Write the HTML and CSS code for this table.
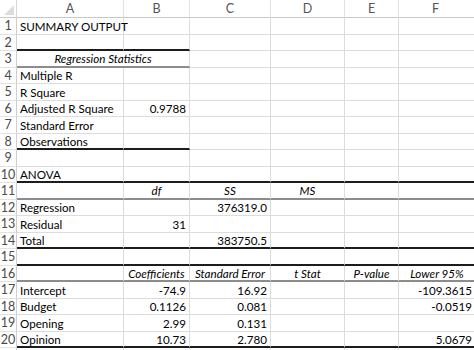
FILE: index.html
```html
<!DOCTYPE html>
<html>
<head>
<meta charset="utf-8">
<link rel="stylesheet" href="styles.css">
</head>
<body>
<div class="sheet">
  <div class="corner"><span class="tri"></span></div>
  <div class="ch">A</div><div class="ch">B</div><div class="ch">C</div><div class="ch">D</div><div class="ch">E</div><div class="ch last">F</div>

  <div class="rh">1</div><div class="c">SUMMARY OUTPUT</div><div class="c"></div><div class="c"></div><div class="c"></div><div class="c"></div><div class="c last"></div>
  <div class="rh">2</div><div class="c bk">&nbsp;</div><div class="c bk"></div><div class="c"></div><div class="c"></div><div class="c"></div><div class="c last"></div>
  <div class="rh">3</div><div class="c i span2 bt">Regression Statistics</div><div class="c"></div><div class="c"></div><div class="c"></div><div class="c last"></div>
  <div class="rh">4</div><div class="c">Multiple R</div><div class="c"></div><div class="c"></div><div class="c"></div><div class="c"></div><div class="c last"></div>
  <div class="rh">5</div><div class="c">R Square</div><div class="c"></div><div class="c"></div><div class="c"></div><div class="c"></div><div class="c last"></div>
  <div class="rh">6</div><div class="c">Adjusted R Square</div><div class="c n">0.9788</div><div class="c"></div><div class="c"></div><div class="c"></div><div class="c last"></div>
  <div class="rh">7</div><div class="c">Standard Error</div><div class="c"></div><div class="c"></div><div class="c"></div><div class="c"></div><div class="c last"></div>
  <div class="rh">8</div><div class="c bk">Observations</div><div class="c bk"></div><div class="c"></div><div class="c"></div><div class="c"></div><div class="c last"></div>
  <div class="rh">9</div><div class="c"></div><div class="c"></div><div class="c"></div><div class="c"></div><div class="c"></div><div class="c last"></div>
  <div class="rh">10</div><div class="c bk">ANOVA</div><div class="c bk"></div><div class="c bk"></div><div class="c bk"></div><div class="c bk"></div><div class="c bk last"></div>
  <div class="rh">11</div><div class="c bt"></div><div class="c i bt">df</div><div class="c i bt">SS</div><div class="c i bt">MS</div><div class="c bt"></div><div class="c bt last"></div>
  <div class="rh">12</div><div class="c">Regression</div><div class="c"></div><div class="c n">376319.0</div><div class="c"></div><div class="c"></div><div class="c last"></div>
  <div class="rh">13</div><div class="c">Residual</div><div class="c n">31</div><div class="c"></div><div class="c"></div><div class="c"></div><div class="c last"></div>
  <div class="rh">14</div><div class="c bk">Total</div><div class="c bk"></div><div class="c n bk">383750.5</div><div class="c bk"></div><div class="c bk"></div><div class="c bk last"></div>
  <div class="rh">15</div><div class="c bk"></div><div class="c bk"></div><div class="c bk"></div><div class="c bk"></div><div class="c bk"></div><div class="c bk last"></div>
  <div class="rh">16</div><div class="c bt"></div><div class="c i bt">Coefficients</div><div class="c i bt">Standard Error</div><div class="c i bt">t Stat</div><div class="c i bt">P-value</div><div class="c i bt last">Lower 95%</div>
  <div class="rh">17</div><div class="c">Intercept</div><div class="c n">-74.9</div><div class="c n">16.92</div><div class="c"></div><div class="c"></div><div class="c n last">-109.3615</div>
  <div class="rh">18</div><div class="c">Budget</div><div class="c n">0.1126</div><div class="c n">0.081</div><div class="c"></div><div class="c"></div><div class="c n last">-0.0519</div>
  <div class="rh">19</div><div class="c">Opening</div><div class="c n">2.99</div><div class="c n">0.131</div><div class="c"></div><div class="c"></div><div class="c last"></div>
  <div class="rh">20</div><div class="c bk">Opinion</div><div class="c n bk">10.73</div><div class="c n bk">2.780</div><div class="c bk"></div><div class="c bk"></div><div class="c n bk last">5.0679</div>
  <div class="rh"></div><div class="c"></div><div class="c"></div><div class="c"></div><div class="c"></div><div class="c"></div><div class="c last"></div>
</div>
</body>
</html>
```

FILE: styles.css
```css
* { box-sizing: border-box; }

html, body {
  margin: 0;
  padding: 0;
  background: #fff;
  width: 474px;
  height: 350px;
  overflow: hidden;
}

.sheet {
  display: grid;
  grid-template-columns: 17px 107px 66px 81px 74px 54px 75px;
  grid-template-rows: 18px repeat(21, 16.5px);
  font-family: Lato, "Open Sans", sans-serif;
  font-size: 11.6px;
  color: #000;
}

/* select-all corner */
.corner {
  position: relative;
  border-right: 1px solid #d6d6d6;
  border-bottom: 1px solid #c8c8c8;
}
.tri {
  position: absolute;
  right: 2px;
  bottom: 2px;
  width: 0;
  height: 0;
  border-style: solid;
  border-width: 0 0 10px 10px;
  border-color: transparent transparent #dcdcdc transparent;
}

/* column letters */
.ch {
  display: flex;
  align-items: center;
  justify-content: center;
  color: #555;
  font-size: 12.5px;
  border-right: 1px solid #e2e2e2;
  border-bottom: 1px solid #c8c8c8;
}

/* row numbers */
.rh {
  display: flex;
  align-items: center;
  justify-content: center;
  color: #4a4a4a;
  font-size: 12.5px;
  border-right: 1px solid #cfcfcf;
  border-bottom: 1px solid #e2e2e2;
}

/* worksheet cells */
.c {
  display: flex;
  align-items: center;
  padding: 1px 3px 0 3px;
  white-space: nowrap;
  border-right: 1px solid #dcdcdc;
  border-bottom: 1px solid #dcdcdc;
}
.last { border-right: none; padding-right: 2px; }

.n { justify-content: flex-end; }
.i { font-style: italic; justify-content: center; }
.span2 { grid-column: span 2; }

/* heavy rule under a cell (table top/bottom) */
.bk { border-bottom: 2px solid #1c1c1c; }
/* header underline */
.bt { border-bottom: 2px solid #8c8c8c; }
```
